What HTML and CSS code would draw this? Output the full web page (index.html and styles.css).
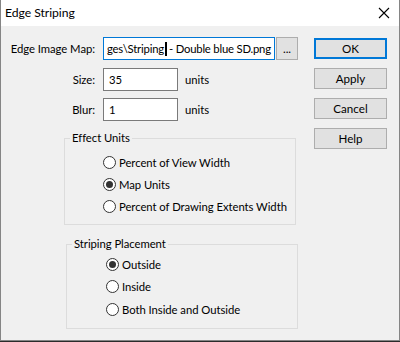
FILE: index.html
```html
<!DOCTYPE html>
<html>
<head>
<meta charset="utf-8">
<link rel="stylesheet" href="styles.css">
</head>
<body>
<div class="window">
  <div class="titlebar">
    <span class="title">Edge Striping</span>
    <svg class="close" width="12" height="12" viewBox="0 0 12 12"><path d="M1 1 L11 11 M11 1 L1 11" stroke="#000" stroke-width="1.1" fill="none"/></svg>
  </div>
  <div class="content">
    <div class="left">
      <div class="row">
        <span class="label">Edge Image Map:</span>
        <div class="field field-path focused"><span>ges\Striping</span><span class="caret"></span><span class="after-caret">- Double blue SD.png</span></div>
        <button class="btn btn-browse">...</button>
      </div>
      <div class="row row-size">
        <span class="label">Size:</span>
        <div class="field field-num">35</div>
        <span class="unit">units</span>
      </div>
      <div class="row row-blur">
        <span class="label">Blur:</span>
        <div class="field field-num">1</div>
        <span class="unit">units</span>
      </div>
      <fieldset class="group group-units">
        <legend>Effect Units</legend>
        <div class="options">
          <div class="radio"><span class="dot"></span>Percent of View Width</div>
          <div class="radio"><span class="dot checked"></span>Map Units</div>
          <div class="radio"><span class="dot"></span>Percent of Drawing Extents Width</div>
        </div>
      </fieldset>
      <fieldset class="group group-place">
        <legend>Striping Placement</legend>
        <div class="options">
          <div class="radio"><span class="dot checked"></span>Outside</div>
          <div class="radio"><span class="dot"></span>Inside</div>
          <div class="radio"><span class="dot"></span>Both Inside and Outside</div>
        </div>
      </fieldset>
    </div>
    <div class="right">
      <button class="btn btn-main btn-default">OK</button>
      <button class="btn btn-main">Apply</button>
      <button class="btn btn-main">Cancel</button>
      <button class="btn btn-main">Help</button>
    </div>
  </div>
</div>
</body>
</html>
```

FILE: styles.css
```css
* { box-sizing: border-box; }
html, body { margin: 0; padding: 0; }
body {
  width: 400px;
  height: 342px;
  background: #2b2b2b;
  font-family: Lato, "Liberation Sans", sans-serif;
  font-size: 11.3px;
  letter-spacing: -0.05px;
  color: #000;
  overflow: hidden;
}
.window {
  width: 400px;
  height: 341px;
  background: #f0f0f0;
  border: 1px solid #858585;
  border-top: none;
  display: flex;
  flex-direction: column;
}
.titlebar {
  height: 26px;
  background: #fff;
  display: flex;
  align-items: center;
  justify-content: space-between;
  padding: 0 9px 0 4px;
  flex-shrink: 0;
}
.title { font-size: 12.2px; line-height: 16px; }
.close { display: block; }
.content {
  display: flex;
  padding-top: 11px;
}
.left {
  width: 296px;
  display: flex;
  flex-direction: column;
}
.row {
  display: flex;
  align-items: center;
  height: 23px;
  white-space: nowrap;
}
.row-size { margin-top: 8px; }
.row-blur { margin-top: 7px; }
.label {
  width: 95px;
  flex-shrink: 0;
  text-align: right;
  padding-right: 1px;
}
.field {
  margin-left: 7px;
  height: 23px;
  background: #fff;
  border: 1px solid #7a7a7a;
  display: flex;
  align-items: center;
  padding-left: 5px;
  white-space: nowrap;
  overflow: hidden;
  flex-shrink: 0;
}
.field.focused { border-color: #0078d7; }
.field-path { width: 172px; padding-left: 3px; letter-spacing: -0.2px; }
.field-num { width: 75px; }
.caret {
  display: inline-block;
  width: 2px;
  height: 14px;
  background: #000;
  margin-left: 1px;
  flex-shrink: 0;
}
.after-caret { margin-left: 2px; }
.unit { margin-left: 7px; }
.btn {
  font-family: inherit;
  font-size: 11.6px;
  color: #000;
  background: #e1e1e1;
  border: 1px solid #adadad;
  padding: 0;
  margin: 0;
}
.btn-browse {
  width: 22px;
  height: 23px;
  margin-left: 1px;
  line-height: 16px;
  flex-shrink: 0;
}
.right {
  margin-left: 17px;
  padding-top: 1px;
  display: flex;
  flex-direction: column;
  gap: 9px;
}
.btn-main {
  width: 73px;
  height: 21px;
}
.btn-default {
  border: 2px solid #0078d7;
}
.group {
  border: 1px solid #dcdcdc;
  margin: 0;
  padding: 0;
  min-width: 0;
}
.group legend {
  padding: 0 2px;
  margin: 0 0 0 5px;
  line-height: 14px;
}
.options {
  display: flex;
  flex-direction: column;
}
.group-units {
  margin-top: 10px;
  margin-left: 63px;
  width: 232px;
  height: 94px;
}
.group-units .options { padding: 6px 0 0 38px; }
.group-place {
  margin-top: 12px;
  margin-left: 65px;
  width: 232px;
  height: 92px;
}
.group-place .options { padding: 2px 0 0 39px; }
.radio {
  display: flex;
  align-items: center;
  height: 22px;
  white-space: nowrap;
}
.group-place .radio { height: 22.5px; }
.dot {
  width: 13px;
  height: 13px;
  border: 1px solid #333;
  border-radius: 50%;
  background: #fff;
  margin-right: 3px;
  display: flex;
  align-items: center;
  justify-content: center;
  flex-shrink: 0;
}
.dot.checked::after {
  content: "";
  width: 7px;
  height: 7px;
  border-radius: 50%;
  background: #333;
}
```
